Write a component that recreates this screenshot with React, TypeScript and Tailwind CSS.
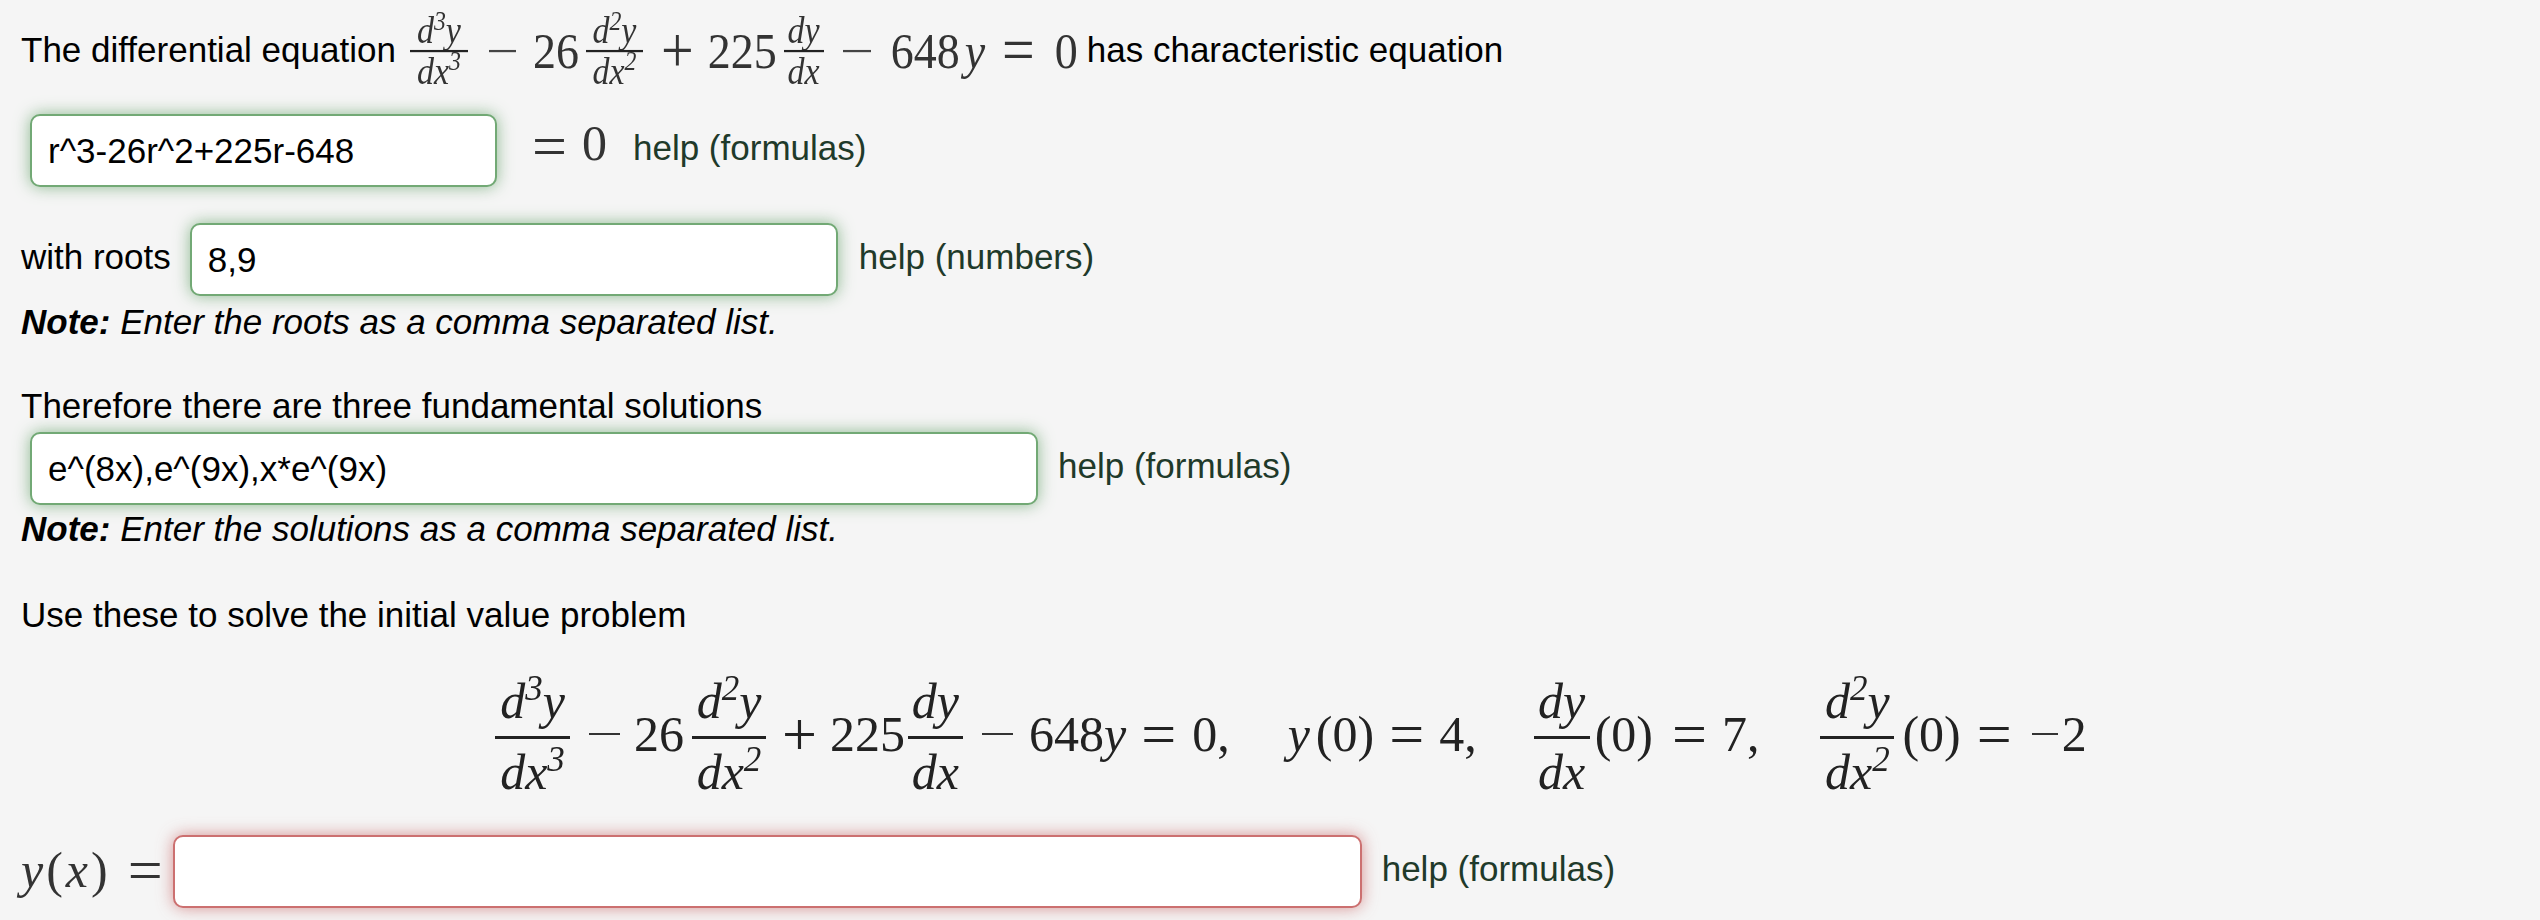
const serif = "font-['Liberation_Serif','DejaVu_Serif',serif]";

function Frac({ num, den, width, small }: { num: React.ReactNode; den: React.ReactNode; width: string; small?: boolean }) {
  return (
    <span className={`inline-flex flex-col items-center shrink-0 italic whitespace-nowrap [&_sup]:text-[0.7em] ${width} ${small ? 'text-[34px] leading-[29px]' : 'text-[50px] leading-[54px] mt-[4px]'}`}>
      <span className={small ? 'pb-[3px]' : 'pb-[8px]'}>{num}</span>
      <span className={`w-full bg-[#222] ${small ? 'h-[2px]' : 'h-[3px]'}`} />
      <span className={small ? 'pt-[2px]' : 'pt-[6px]'}>{den}</span>
    </span>
  );
}

function Help({ label, className }: { label: string; className: string }) {
  return <span className={`text-[#1f3a2a] whitespace-nowrap mb-[6px] ${className}`}>help ({label})</span>;
}

function Field({ value, width, wrong }: { value: string; width: string; wrong?: boolean }) {
  return (
    <input
      readOnly
      value={value}
      className={`${width} h-[73px] shrink-0 bg-white rounded-[10px] border-2 px-[16px] text-black outline-none ${
        wrong
          ? 'border-[#cc7070] shadow-[0_0_16px_rgba(204,112,112,0.75)]'
          : 'border-[#72a975] shadow-[0_0_16px_rgba(114,169,117,0.8)]'
      }`}
    />
  );
}

export default function App() {
  return (
    <div className="w-[2540px] h-[920px] overflow-hidden bg-[#f5f5f5] pl-[21px] text-black text-[35px] leading-[40px] font-['Liberation_Sans',Arial,sans-serif]">
      <div className="h-[100px] flex items-center">
        <span className="whitespace-nowrap">The differential equation</span>
        <span className={`${serif} flex items-center scale-y-[1.12] text-[#333] text-[46px] leading-none whitespace-nowrap ml-[14px] blur-[0.4px]`}>
          <Frac small width="w-[58px]" num={<>d<sup>3</sup>y</>} den={<>dx<sup>3</sup></>} />
          <span className="ml-[21px] w-[27px] h-[2px] bg-[#444]" />
          <span className="ml-[17px]">26</span>
          <span className="ml-[7px] flex"><Frac small width="w-[57px]" num={<>d<sup>2</sup>y</>} den={<>dx<sup>2</sup></>} /></span>
          <span className="ml-[18px] text-[58px]">+</span>
          <span className="ml-[14px]">225</span>
          <span className="ml-[7px] flex"><Frac small width="w-[40px]" num="dy" den="dx" /></span>
          <span className="ml-[19px] w-[28px] h-[2px] bg-[#444]" />
          <span className="ml-[20px]">648</span>
          <i className="ml-[5px]">y</i>
          <span className="ml-[17px] text-[58px]">=</span>
          <span className="ml-[20px]">0</span>
        </span>
        <span className="ml-[9px] whitespace-nowrap">has characteristic equation</span>
      </div>

      <div className="mt-[14px] ml-[9px] flex items-center">
        <Field value="r^3-26r^2+225r-648" width="w-[467px]" />
        <span className={`${serif} ml-[35px] mb-[10px] text-[62px] text-[#333] leading-none blur-[0.4px]`}>=</span>
        <span className={`${serif} ml-[15px] mb-[16px] text-[50px] text-[#333] leading-none blur-[0.4px]`}>0</span>
        <Help label="formulas" className="ml-[26px]" />
      </div>

      <div className="mt-[36px] flex items-center">
        <span className="whitespace-nowrap mb-[6px]">with roots</span>
        <span className="ml-[19px] flex"><Field value="8,9" width="w-[648px]" /></span>
        <Help label="numbers" className="ml-[21px]" />
      </div>

      <div className="mt-[6px] italic whitespace-nowrap"><b>Note:</b> Enter the roots as a comma separated list.</div>

      <div className="mt-[44px] whitespace-nowrap">Therefore there are three fundamental solutions</div>

      <div className="mt-[6px] ml-[9px] flex items-center">
        <Field value="e^(8x),e^(9x),x*e^(9x)" width="w-[1008px]" />
        <Help label="formulas" className="ml-[20px]" />
      </div>

      <div className="mt-[4px] italic whitespace-nowrap"><b>Note:</b> Enter the solutions as a comma separated list.</div>

      <div className="mt-[46px] whitespace-nowrap">Use these to solve the initial value problem</div>

      <div className={`${serif} mt-[44px] h-[110px] pl-[474px] flex items-center text-[50px] leading-none text-[#222] whitespace-nowrap blur-[0.4px]`}>
        <Frac width="w-[75px]" num={<>d<sup>3</sup>y</>} den={<>dx<sup>3</sup></>} />
        <span className="ml-[19px] w-[31px] h-[2px] bg-[#333]" />
        <span className="ml-[14px]">26</span>
        <span className="ml-[8px] flex"><Frac width="w-[74px]" num={<>d<sup>2</sup>y</>} den={<>dx<sup>2</sup></>} /></span>
        <span className="ml-[16px] text-[62px]">+</span>
        <span className="ml-[13px]">225</span>
        <span className="ml-[3px] flex"><Frac width="w-[55px]" num="dy" den="dx" /></span>
        <span className="ml-[19px] w-[31px] h-[2px] bg-[#333]" />
        <span className="ml-[16px]">648<i>y</i></span>
        <span className="ml-[15px] text-[62px]">=</span>
        <span className="ml-[16px]">0,</span>
        <i className="ml-[58px]">y</i>
        <span className="ml-[6px]">(0)</span>
        <span className="ml-[15px] text-[62px]">=</span>
        <span className="ml-[15px]">4,</span>
        <span className="ml-[57px] flex"><Frac width="w-[56px]" num="dy" den="dx" /></span>
        <span className="ml-[5px]">(0)</span>
        <span className="ml-[19px] text-[62px]">=</span>
        <span className="ml-[15px]">7,</span>
        <span className="ml-[61px] flex"><Frac width="w-[74px]" num={<>d<sup>2</sup>y</>} den={<>dx<sup>2</sup></>} /></span>
        <span className="ml-[8px]">(0)</span>
        <span className="ml-[16px] text-[62px]">=</span>
        <span className="ml-[20px] w-[26px] h-[2px] bg-[#333]" />
        <span className="ml-[4px]">2</span>
      </div>

      <div className="mt-[46px] flex items-center">
        <span className={`${serif} flex items-center mb-[3px] text-[50px] leading-none text-[#333] blur-[0.4px]`}>
          <i>y</i>
          <span className="ml-[3px]">(</span>
          <i className="ml-[3px]">x</i>
          <span className="ml-[3px]">)</span>
          <span className="ml-[20px] text-[62px]">=</span>
        </span>
        <span className="ml-[10px] flex"><Field value="" wrong width="w-[1189px]" /></span>
        <Help label="formulas" className="ml-[20px]" />
      </div>
    </div>
  );
}
